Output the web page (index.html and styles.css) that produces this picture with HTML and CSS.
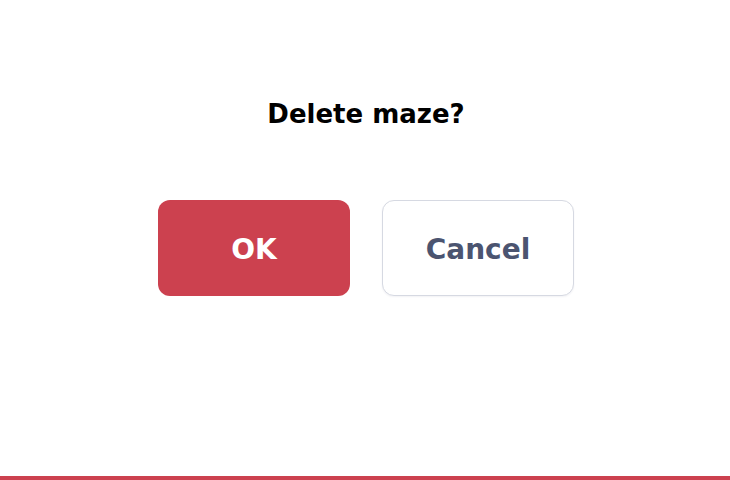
FILE: index.html
```html
<!DOCTYPE html>
<html>
<head>
<meta charset="utf-8">
<link rel="stylesheet" href="styles.css">
</head>
<body>
<div class="page">
  <div class="dialog">
    <h1 class="title">Delete maze?</h1>
    <div class="actions">
      <button class="btn btn-ok">OK</button>
      <button class="btn btn-cancel">Cancel</button>
    </div>
  </div>
  <div class="bar"></div>
</div>
</body>
</html>
```
FILE: styles.css
```css
html, body {
  margin: 0;
  padding: 0;
  background: #ffffff;
}
.page {
  width: 730px;
  height: 480px;
  display: flex;
  flex-direction: column;
  font-family: "DejaVu Sans", sans-serif;
}
.dialog {
  flex: 1;
  display: flex;
  flex-direction: column;
  align-items: center;
  padding-top: 97px;
  padding-left: 2px;
}
.title {
  margin: 0;
  font-size: 26px;
  font-weight: 700;
  color: #000000;
  line-height: 34px;
}
.actions {
  display: flex;
  gap: 32px;
  margin-top: 69px;
}
.btn {
  width: 192px;
  height: 96px;
  border-radius: 12px;
  font-family: "DejaVu Sans", sans-serif;
  font-size: 28px;
  font-weight: 700;
  cursor: pointer;
  padding: 3px 0 0 0;
}
.btn-ok {
  background: #cc414f;
  color: #ffffff;
  border: none;
}
.btn-cancel {
  background: #ffffff;
  color: #4b5470;
  border: 1px solid #d6d9e2;
  box-shadow: 0 1px 2px rgba(30, 40, 80, 0.06);
}
.bar {
  height: 4px;
  background: #cc414f;
}
```
